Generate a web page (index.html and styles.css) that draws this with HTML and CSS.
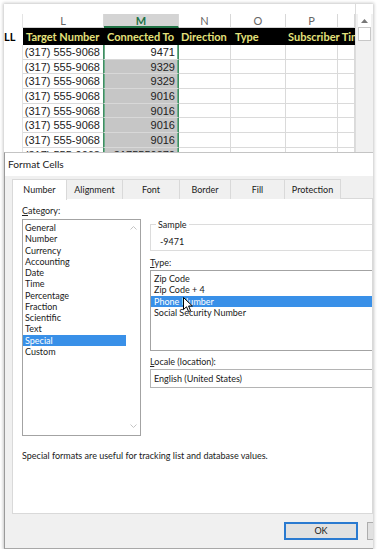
FILE: index.html
```html
<!DOCTYPE html>
<html>
<head>
<meta charset="utf-8">
<link rel="stylesheet" href="styles.css">
</head>
<body>
<div class="shot">
  <div class="sheet">
    <div class="grid">
      <div class="toprow"></div>
      <div class="row colhead">
        <div class="c k"></div><div class="c l">L</div><div class="c m">M</div><div class="c n">N</div><div class="c o">O</div><div class="c p">P</div><div class="c q"></div>
      </div>
      <div class="row titles">
        <div class="c k">LL</div><div class="c l">Target Number</div><div class="c m">Connected To</div><div class="c n">Direction</div><div class="c o">Type</div><div class="c p">Subscriber Time</div><div class="c q"></div>
      </div>
      <div class="row data">
        <div class="c k"></div><div class="c l">(317) 555-9068</div><div class="c m active">9471</div><div class="c n"></div><div class="c o"></div><div class="c p"></div><div class="c q"></div>
      </div>
      <div class="row data">
        <div class="c k"></div><div class="c l">(317) 555-9068</div><div class="c m">9329</div><div class="c n"></div><div class="c o"></div><div class="c p"></div><div class="c q"></div>
      </div>
      <div class="row data">
        <div class="c k"></div><div class="c l">(317) 555-9068</div><div class="c m">9329</div><div class="c n"></div><div class="c o"></div><div class="c p"></div><div class="c q"></div>
      </div>
      <div class="row data">
        <div class="c k"></div><div class="c l">(317) 555-9068</div><div class="c m">9016</div><div class="c n"></div><div class="c o"></div><div class="c p"></div><div class="c q"></div>
      </div>
      <div class="row data">
        <div class="c k"></div><div class="c l">(317) 555-9068</div><div class="c m">9016</div><div class="c n"></div><div class="c o"></div><div class="c p"></div><div class="c q"></div>
      </div>
      <div class="row data">
        <div class="c k"></div><div class="c l">(317) 555-9068</div><div class="c m">9016</div><div class="c n"></div><div class="c o"></div><div class="c p"></div><div class="c q"></div>
      </div>
      <div class="row data">
        <div class="c k"></div><div class="c l">(317) 555-9068</div><div class="c m">9016</div><div class="c n"></div><div class="c o"></div><div class="c p"></div><div class="c q"></div>
      </div>
      <div class="row data">
        <div class="c k"></div><div class="c l">(317) 555-9068</div><div class="c m">3175559870</div><div class="c n"></div><div class="c o"></div><div class="c p"></div><div class="c q"></div>
      </div>
    </div>
    <div class="vscroll">
      <div class="vtop"></div>
      <div class="vup"><svg width="7" height="4" viewBox="0 0 7 4"><polygon points="0,4 3.5,0 7,4" fill="#777"/></svg></div>
      <div class="vthumb"></div>
    </div>
  </div>

  <div class="dialog">
    <div class="titlebar">Format Cells</div>
    <div class="dbody">
      <div class="tabs">
        <div class="tab sel t1">Number</div>
        <div class="tab t2">Alignment</div>
        <div class="tab t3">Font</div>
        <div class="tab t4">Border</div>
        <div class="tab t5">Fill</div>
        <div class="tab t6">Protection</div>
      </div>
      <div class="panel">
        <div class="cols">
          <div class="leftcol">
            <div class="lbl"><u>C</u>ategory:</div>
            <div class="listbox cat">
              <div class="items">
                <div class="it">General</div>
                <div class="it">Number</div>
                <div class="it">Currency</div>
                <div class="it">Accounting</div>
                <div class="it">Date</div>
                <div class="it">Time</div>
                <div class="it">Percentage</div>
                <div class="it">Fraction</div>
                <div class="it">Scientific</div>
                <div class="it">Text</div>
                <div class="it on">Special</div>
                <div class="it">Custom</div>
              </div>
              <div class="gutter">
                <svg width="7" height="4" viewBox="0 0 7 4"><polyline points="0.5,3.5 3.5,0.5 6.5,3.5" fill="none" stroke="#c4c4c4" stroke-width="1"/></svg>
                <svg width="7" height="4" viewBox="0 0 7 4"><polyline points="0.5,0.5 3.5,3.5 6.5,0.5" fill="none" stroke="#c4c4c4" stroke-width="1"/></svg>
              </div>
            </div>
          </div>
          <div class="rightcol">
            <fieldset class="sample">
              <legend>Sample</legend>
              <div class="sval">-9471</div>
            </fieldset>
            <div class="lbl typelbl"><u>T</u>ype:</div>
            <div class="listbox typ">
              <div class="it">Zip Code</div>
              <div class="it">Zip Code + 4</div>
              <div class="it on">Phone Number</div>
              <div class="it">Social Security Number</div>
            </div>
            <div class="lbl loclbl"><u>L</u>ocale (location):</div>
            <div class="combo">English (United States)</div>
          </div>
        </div>
        <p class="desc">Special formats are useful for tracking list and database values.</p>
      </div>
      <div class="buttons">
        <div class="btn ok">OK</div>
        <div class="btn cancel">Cancel</div>
      </div>
    </div>
  </div>

  <svg class="cursor" width="11" height="16" viewBox="0 0 11 16">
    <path d="M0.5,0.5 L0.5,12.5 L3.5,9.8 L5.6,14.6 L7.6,13.7 L5.6,9 L9.4,9 Z" fill="#fff" stroke="#000" stroke-width="1" stroke-linejoin="round"/>
  </svg>
</div>
</body>
</html>
```

FILE: styles.css
```css
html, body {
  margin: 0;
  padding: 0;
  background: #fff;
}

.shot {
  position: relative;
  margin: 4px 0 0 4px;
  width: 369px;
  height: 545px;
  overflow: hidden;
  background: #fff;
  box-shadow: 0 0 3px 1px rgba(0, 0, 0, 0.22);
}

/* ---------- spreadsheet ---------- */
.sheet {
  display: flex;
  height: 148px;
  overflow: hidden;
}

.grid {
  width: 351px;
  flex: none;
  overflow: hidden;
}

.toprow {
  height: 10px;
}

.row {
  display: flex;
}

.c {
  flex: none;
  box-sizing: border-box;
  overflow: hidden;
  white-space: nowrap;
}

.k { width: 19px; }
.l { width: 81px; }
.m { width: 75px; }
.n { width: 52px; }
.o { width: 55px; }
.p { width: 52px; }
.q { width: 17px; }

.colhead {
  height: 14px;
  font-family: Lato, "Liberation Sans", sans-serif;
  font-size: 11px;
  color: #666;
  text-align: center;
  line-height: 14px;
}

.colhead .c {
  border-right: 1px solid #d8d8d8;
  border-bottom: 1px solid #d4d4d4;
}

.colhead .k {
  border-right: 1px solid #e4e4e4;
  border-bottom: none;
}

.colhead .m {
  background: #d4d4d4;
  color: #217346;
  font-weight: 700;
  border-bottom: 2px solid #217346;
}

.titles {
  height: 17px;
  background: #000;
  font-family: Lato, "Liberation Sans", sans-serif;
  font-weight: 700;
  font-size: 11px;
  line-height: 17px;
  color: #e4e27c;
}

.titles .c {
  padding-left: 3px;
}

.titles .k {
  background: #fff;
  color: #000;
  padding-left: 0;
}

.titles .m {
  padding-left: 3px;
}

.titles .n {
  padding-left: 2px;
}

.titles .o {
  padding-left: 4px;
}

.titles .p {
  overflow: visible;
  padding-left: 2px;
}

.data {
  height: 14.7px;
  font-family: "Liberation Sans", Arial, sans-serif;
  font-size: 11px;
  line-height: 14px;
  color: #222;
}

.data .c {
  border-right: 1px solid #dadada;
  border-bottom: 1px solid #dadada;
}

.data .k {
  border-bottom: none;
  border-right: 1px solid #e2e2e2;
}

.data .l {
  text-align: right;
  padding-right: 3px;
  border-right: 1px solid #3f8d62;
}

.data .m {
  background: #c6c6c6;
  text-align: right;
  padding-right: 3px;
  border-right: 1px solid #3f8d62;
  border-bottom-color: #d8d8d8;
  box-shadow: inset 1px 0 0 #6fae8b, inset -1px 0 0 #6fae8b;
}

.data .m.active {
  background: #fff;
}

.vscroll {
  width: 18px;
  flex: none;
  background: #f1f1f1;
  border-left: 1px solid #dcdcdc;
  box-sizing: border-box;
  display: flex;
  flex-direction: column;
  align-items: center;
}

.vtop {
  height: 10px;
  align-self: stretch;
  background: #fff;
}

.vup {
  width: 13px;
  height: 13px;
  background: #fff;
  display: flex;
  align-items: center;
  justify-content: center;
}

.vthumb {
  width: 11px;
  height: 12px;
  background: #fff;
  border: 1px solid #c8c8c8;
}

/* ---------- dialog ---------- */
.dialog {
  height: 397px;
  box-sizing: border-box;
  border-left: 1px solid #9a9a9a;
  border-top: 1px solid #c4c4c4;
  border-bottom: 1px solid #a8a8a8;
  background: #f0f0f0;
  font-family: Lato, "Noto Sans", sans-serif;
  font-size: 9px;
  color: #1a1a1a;
}

.titlebar {
  height: 23px;
  background: #fff;
  padding-left: 3px;
  line-height: 23px;
  font-size: 10.2px;
  color: #222;
}

.dbody {
  padding: 3px 0 0 7px;
}

.tabs {
  display: flex;
  height: 20px;
  position: relative;
  z-index: 1;
}

.tab {
  box-sizing: border-box;
  height: 20px;
  border: 1px solid #d9d9d9;
  border-left: none;
  border-bottom: none;
  background: #f0f0f0;
  text-align: center;
  line-height: 19px;
  flex: none;
}

.tab.sel {
  background: #fff;
  border-left: 1px solid #d9d9d9;
  height: 21px;
}

.t1 { width: 55px; }
.t2 { width: 56px; }
.t3 { width: 57px; }
.t4 { width: 51px; }
.t5 { width: 54px; }
.t6 { width: 56px; }

.panel {
  margin-top: -1px;
  width: 361px;
  height: 316px;
  box-sizing: border-box;
  border: 1px solid #d9d9d9;
  background: #fff;
  padding-left: 9px;
  overflow: hidden;
}

.cols {
  display: flex;
  gap: 9px;
}

.leftcol {
  width: 119px;
  flex: none;
  padding-top: 6px;
}

.lbl {
  height: 12px;
  line-height: 12px;
  color: #222;
}

.listbox {
  box-sizing: border-box;
  border: 1px solid #a3a3a3;
  background: #fff;
}

.cat {
  margin-top: 2px;
  height: 217px;
  display: flex;
}

.cat .items {
  width: 103px;
  padding-top: 2px;
}

.it {
  height: 11.25px;
  line-height: 11.25px;
  padding-left: 2px;
  white-space: nowrap;
}

.it.on {
  background: #3990e8;
  color: #fff;
}

.gutter {
  flex: 1;
  display: flex;
  flex-direction: column;
  justify-content: space-between;
  align-items: center;
  padding: 6px 0 7px;
}

.rightcol {
  flex: 1;
  margin-right: -12px;
}

.sample {
  margin: 20px 0 0;
  padding: 6px 0 3px 8px;
  border: 1px solid #dcdcdc;
  min-width: 0;
}

.sample legend {
  padding: 0 2px;
  margin-left: -3px;
  height: 11px;
  line-height: 11px;
  color: #222;
}

.sval {
  height: 11px;
  line-height: 11px;
  padding-left: 1px;
}

.typelbl {
  margin-top: 6px;
}

.typ {
  margin-top: 1px;
  height: 81px;
  padding-top: 2px;
}

.typ .it {
  padding-left: 3px;
}

.loclbl {
  margin-top: 5px;
}

.combo {
  margin-top: 1px;
  height: 19px;
  box-sizing: border-box;
  border: 1px solid #b4b4b4;
  background: #fff;
  padding-left: 3px;
  line-height: 17px;
}

.desc {
  margin: 14px 0 0;
  height: 11px;
  line-height: 11px;
  white-space: nowrap;
}

.buttons {
  display: flex;
  gap: 9px;
  padding: 8px 0 0 272px;
}

.btn {
  flex: none;
  width: 74px;
  height: 18px;
  box-sizing: border-box;
  background: #e1e1e1;
  text-align: center;
  line-height: 16px;
  font-size: 9px;
}

.ok {
  border: 1px solid #2a7ad0;
  box-shadow: inset 0 0 0 1px #2a7ad0;
}

.cancel {
  border: 1px solid #adadad;
}

.cursor {
  position: absolute;
  left: 179px;
  top: 293px;
}
```
